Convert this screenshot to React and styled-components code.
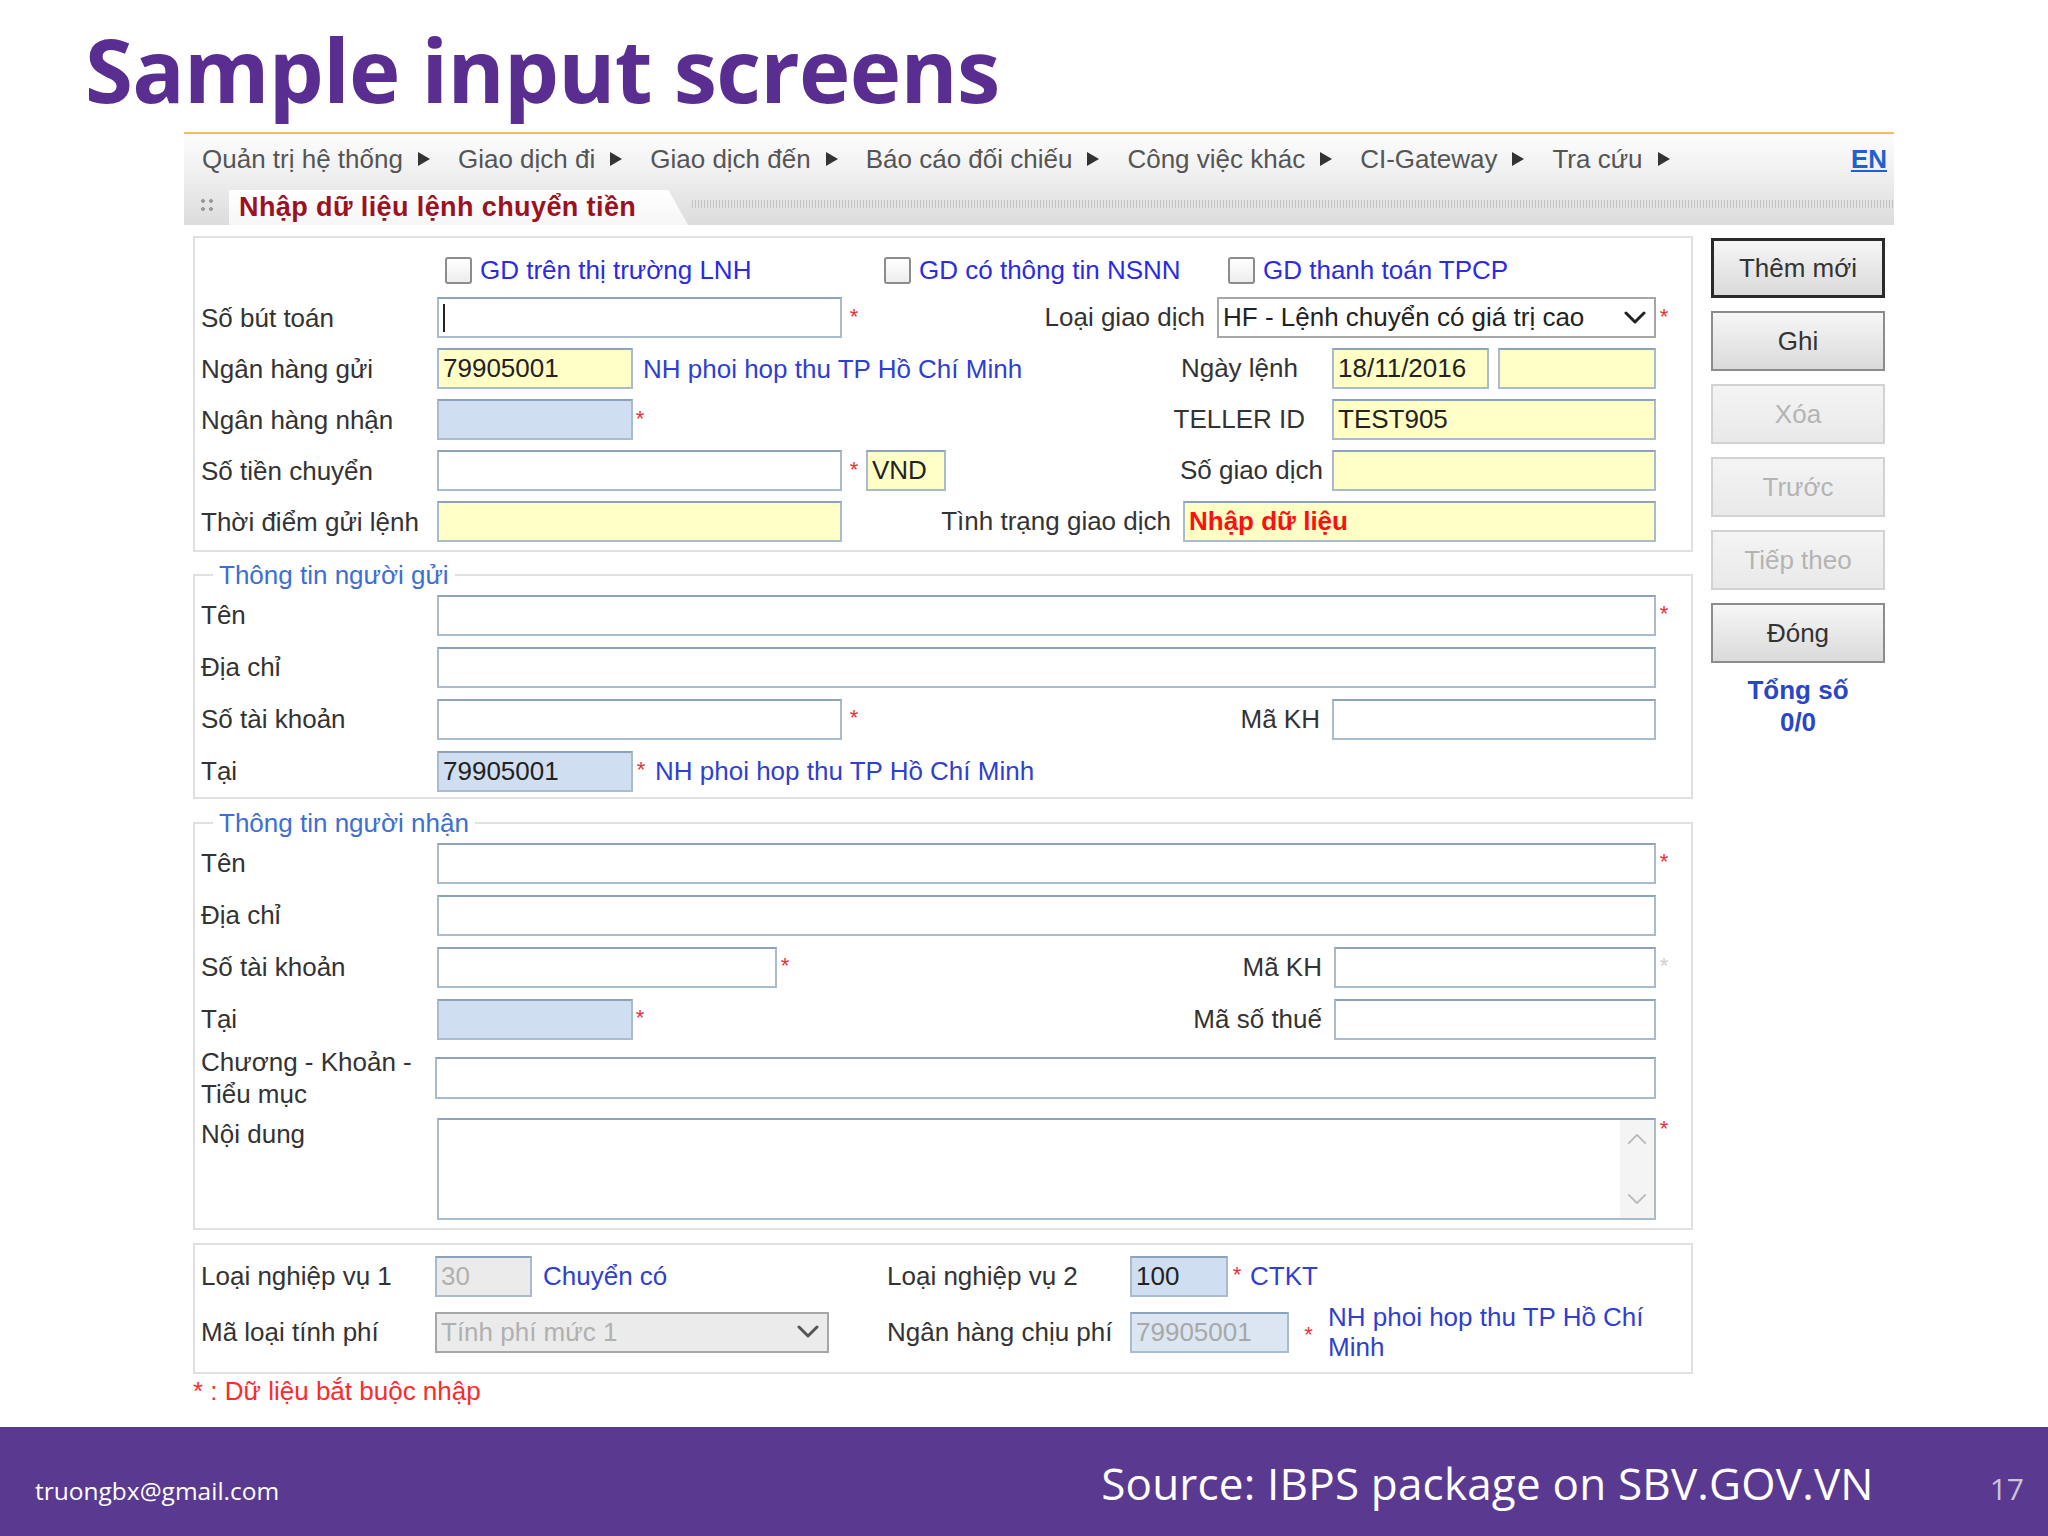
import React from "react";
import styled, { createGlobalStyle } from "styled-components";

const GlobalStyle = createGlobalStyle`
  html, body { margin: 0; padding: 0; background: #fff; }
  body { font-family: "Liberation Sans", Arial, sans-serif; }
`;

const fills = {
  white: "#ffffff",
  yellow: "#ffffc6",
  blue: "#cfdff1",
  pale: "#dbe6f2",
  gray: "#ebebeb",
};

const Slide = styled.div`
  width: 2048px;
  height: 1536px;
  display: flex;
  flex-direction: column;
  background: #fff;
  overflow: hidden;
`;

const Title = styled.h1`
  margin: 14px 0 0 85px;
  font-family: "Open Sans", Lato, sans-serif;
  font-weight: 700;
  font-size: 87px;
  line-height: 110px;
  letter-spacing: -0.7px;
  color: #5a2e91;
`;

const Screen = styled.div`
  margin: 8px 0 0 184px;
  width: 1710px;
  font-family: "Liberation Sans", Arial, sans-serif;
  font-size: 26px;
  color: #333;
`;

const MenuBar = styled.div`
  height: 50px;
  border-top: 2px solid #f3bd62;
  background: linear-gradient(#fdfdfd, #ececec);
  display: flex;
  align-items: center;
  padding: 0 7px 0 18px;
  color: #555;
`;

const MenuItem = styled.span`
  white-space: nowrap;
`;

const Arrow = styled.span`
  width: 0;
  height: 0;
  border-left: 12px solid #333;
  border-top: 7px solid transparent;
  border-bottom: 7px solid transparent;
  margin: 0 28px 0 15px;
`;

const Lang = styled.span`
  margin-left: auto;
  font-weight: 700;
  color: #2160cf;
  text-decoration: underline;
`;

const TabBar = styled.div`
  height: 41px;
  background: linear-gradient(#ebebeb, #dcdcdc);
  display: flex;
  align-items: flex-end;
  padding-left: 15px;
`;

const Grip = styled.span`
  width: 16px;
  height: 16px;
  align-self: center;
  margin-right: 14px;
  background: radial-gradient(circle, #9a9a9a 1.6px, transparent 2.2px) 0 0 / 8px 8px;
`;

const Tab = styled.div`
  height: 35px;
  display: flex;
  align-items: center;
  padding: 0 52px 0 10px;
  background: linear-gradient(#ffffff, #f6f6f6);
  clip-path: polygon(0 0, calc(100% - 20px) 0, 100% 100%, 0 100%);
  font-weight: 700;
  font-size: 27px;
  letter-spacing: 0.4px;
  color: #9b1122;
`;

const Strip = styled.div`
  flex: 1;
  height: 8px;
  margin: 0 0 17px 4px;
  background: repeating-linear-gradient(90deg, #c2c2c2 0 1px, #e4e4e4 1px 3px);
`;

const Body = styled.div`
  display: flex;
  gap: 18px;
  padding: 11px 0 0 9px;
`;

const LeftCol = styled.div`
  width: 1500px;
  display: flex;
  flex-direction: column;
`;

const Panel = styled.div`
  border: 2px solid #e0e0e0;
  padding: ${(p) => p.$pad || "10px 19px 3px 6px"};
  margin-top: ${(p) => p.$mt || 0}px;
`;

const Fieldset = styled.fieldset`
  margin: ${(p) => p.$mt}px 0 0;
  border: 2px solid #e0e0e0;
  padding: 0 19px ${(p) => p.$pb || 0}px 6px;
  min-width: 0;
`;

const Legend = styled.legend`
  margin-left: 12px;
  padding: 0 6px;
  line-height: 28px;
  color: #3b6fd4;
`;

const Row = styled.div`
  display: flex;
  align-items: ${(p) => p.$align || "center"};
  height: ${(p) => p.$h || 51}px;
`;

const CheckRow = styled(Row)`
  padding-left: 244px;
`;

const CheckItem = styled.label`
  display: flex;
  align-items: center;
  width: ${(p) => p.$w}px;
  color: #2b2be6;
  white-space: nowrap;
`;

const CheckBox = styled.span`
  box-sizing: border-box;
  width: 27px;
  height: 27px;
  border: 2px solid #8c8c8c;
  border-radius: 3px;
  background: linear-gradient(#ffffff, #ededed);
  margin-right: 8px;
`;

const Label = styled.span`
  width: ${(p) => p.$w || 236}px;
  flex: none;
  line-height: ${(p) => p.$lh || 32}px;
  margin-top: ${(p) => p.$mt || 0}px;
  white-space: ${(p) => (p.$wrap ? "normal" : "nowrap")};
`;

const RightLabel = styled.span`
  margin-right: ${(p) => p.$mr || 12}px;
  white-space: nowrap;
`;

const Spacer = styled.span`
  flex: 1;
`;

const Box = styled.div`
  box-sizing: border-box;
  width: ${(p) => (p.$w ? `${p.$w}px` : "auto")};
  flex: ${(p) => (p.$w ? "none" : 1)};
  height: ${(p) => p.$h || 41}px;
  margin-top: ${(p) => p.$mt || 0}px;
  border: 2px solid #a9bbcf;
  border-top-color: #8da3bc;
  background: ${(p) => fills[p.$tone || "white"]};
  display: flex;
  align-items: center;
  padding: 0 4px;
  color: ${(p) => p.$color || "#222"};
  font-weight: ${(p) => (p.$bold ? 700 : 400)};
  white-space: nowrap;
  overflow: hidden;
`;

const SelectBox = styled(Box)`
  border-color: #a7a7a7;
  justify-content: space-between;
  padding-right: 8px;
`;

const TextArea = styled(Box)`
  align-items: stretch;
  justify-content: flex-end;
  padding: 0;
`;

const ScrollTrack = styled.div`
  width: 34px;
  background: #f4f4f4;
  display: flex;
  flex-direction: column;
  justify-content: space-between;
  align-items: center;
  padding: 12px 0;
`;

const Caret = styled.span`
  width: 2px;
  height: 28px;
  background: #222;
`;

const Star = styled.span`
  width: ${(p) => p.$w || 16}px;
  flex: none;
  align-self: flex-start;
  margin-top: ${(p) => p.$mt || 14}px;
  color: ${(p) => (p.$faint ? "#cfcfcf" : "#e8303a")};
  font-size: 22px;
  line-height: 1;
  text-align: center;
  visibility: ${(p) => (p.$off ? "hidden" : "visible")};
`;

const Link = styled.span`
  color: #2f3fd0;
  margin-left: ${(p) => p.$ml || 0}px;
  width: ${(p) => (p.$w ? `${p.$w}px` : "auto")};
  line-height: ${(p) => p.$lh || 32}px;
  white-space: ${(p) => (p.$w ? "normal" : "nowrap")};
`;

const Cell = styled.div`
  width: ${(p) => p.$w}px;
  flex: none;
  display: flex;
  align-items: center;
`;

const Footnote = styled.div`
  margin-top: 3px;
  line-height: 28px;
  color: #ff2a2a;
`;

const ButtonCol = styled.div`
  width: 174px;
  padding-top: 2px;
  display: flex;
  flex-direction: column;
  gap: 13px;
`;

const Btn = styled.div`
  box-sizing: border-box;
  height: 60px;
  display: flex;
  align-items: center;
  justify-content: center;
  border: ${(p) =>
    p.$primary ? "3px solid #2a2a2a" : p.$disabled ? "2px solid #d2d2d2" : "2px solid #8c8c8c"};
  background: ${(p) =>
    p.$disabled ? "linear-gradient(#f4f4f4, #e9e9e9)" : "linear-gradient(#f6f6f6, #dadada)"};
  color: ${(p) => (p.$disabled ? "#b4b4b4" : "#333")};
`;

const Total = styled.div`
  margin-top: -2px;
  text-align: center;
  font-weight: 700;
  color: #2a46c8;
  line-height: 32px;
`;

const Footer = styled.div`
  margin-top: auto;
  box-sizing: border-box;
  height: 109px;
  background: #5a3991;
  display: flex;
  align-items: baseline;
  padding: 31px 24px 0 35px;
  color: #fff;
  font-family: "Open Sans", Lato, sans-serif;
`;

const Email = styled.span`
  flex: 1;
  font-size: 24.5px;
`;

const Source = styled.span`
  font-size: 44px;
  line-height: 50px;
  letter-spacing: 0.2px;
`;

const PageNum = styled.span`
  margin-left: 116px;
  font-size: 30px;
  color: #cbc3dd;
`;

const Chevron = ({ up, color = "#222", w = 22, h = 14, sw = 3 }) => (
  <svg width={w} height={h} viewBox="0 0 22 14">
    <polyline
      points={up ? "2,12 11,3 20,12" : "2,2 11,11 20,2"}
      fill="none"
      stroke={color}
      strokeWidth={sw}
      strokeLinecap="round"
      strokeLinejoin="round"
    />
  </svg>
);

const menu = [
  "Quản trị hệ thống",
  "Giao dịch đi",
  "Giao dịch đến",
  "Báo cáo đối chiếu",
  "Công việc khác",
  "CI-Gateway",
  "Tra cứu",
];

const buttons = [
  { text: "Thêm mới", primary: true },
  { text: "Ghi" },
  { text: "Xóa", disabled: true },
  { text: "Trước", disabled: true },
  { text: "Tiếp theo", disabled: true },
  { text: "Đóng" },
];

const BANK = "NH phoi hop thu TP Hồ Chí Minh";

export default function App() {
  return (
    <Slide>
      <GlobalStyle />
      <Title>Sample input screens</Title>
      <Screen>
        <MenuBar>
          {menu.map((m) => (
            <React.Fragment key={m}>
              <MenuItem>{m}</MenuItem>
              <Arrow />
            </React.Fragment>
          ))}
          <Lang>EN</Lang>
        </MenuBar>
        <TabBar>
          <Grip />
          <Tab>Nhập dữ liệu lệnh chuyển tiền</Tab>
          <Strip />
        </TabBar>
        <Body>
          <LeftCol>
            <Panel>
              <CheckRow $h={44}>
                <CheckItem $w={439}>
                  <CheckBox />
                  GD trên thị trường LNH
                </CheckItem>
                <CheckItem $w={344}>
                  <CheckBox />
                  GD có thông tin NSNN
                </CheckItem>
                <CheckItem>
                  <CheckBox />
                  GD thanh toán TPCP
                </CheckItem>
              </CheckRow>
              <Row>
                <Label>Số bút toán</Label>
                <Box $w={405}>
                  <Caret />
                </Box>
                <Star $w={24}>*</Star>
                <Spacer />
                <RightLabel>Loại giao dịch</RightLabel>
                <SelectBox $w={439}>
                  HF - Lệnh chuyển có giá trị cao
                  <Chevron />
                </SelectBox>
                <Star>*</Star>
              </Row>
              <Row>
                <Label>Ngân hàng gửi</Label>
                <Box $w={196} $tone="yellow">79905001</Box>
                <Link $ml={10}>{BANK}</Link>
                <Spacer />
                <RightLabel $mr={34}>Ngày lệnh</RightLabel>
                <Box $w={157} $tone="yellow">18/11/2016</Box>
                <Box $w={158} $tone="yellow" style={{ marginLeft: 9 }} />
                <Star $off>*</Star>
              </Row>
              <Row>
                <Label>Ngân hàng nhận</Label>
                <Box $w={196} $tone="blue" />
                <Star $w={14}>*</Star>
                <Spacer />
                <RightLabel $mr={27}>TELLER ID</RightLabel>
                <Box $w={324} $tone="yellow">TEST905</Box>
                <Star $off>*</Star>
              </Row>
              <Row>
                <Label>Số tiền chuyển</Label>
                <Box $w={405} />
                <Star $w={24}>*</Star>
                <Box $w={80} $tone="yellow">VND</Box>
                <Spacer />
                <RightLabel $mr={9}>Số giao dịch</RightLabel>
                <Box $w={324} $tone="yellow" />
                <Star $off>*</Star>
              </Row>
              <Row>
                <Label>Thời điểm gửi lệnh</Label>
                <Box $w={405} $tone="yellow" />
                <Spacer />
                <RightLabel>Tình trạng giao dịch</RightLabel>
                <Box $w={473} $tone="yellow" $color="#ff1010" $bold>
                  Nhập dữ liệu
                </Box>
                <Star $off>*</Star>
              </Row>
            </Panel>

            <Fieldset $mt={9}>
              <Legend>Thông tin người gửi</Legend>
              <Row $h={52}>
                <Label>Tên</Label>
                <Box />
                <Star>*</Star>
              </Row>
              <Row $h={52}>
                <Label>Địa chỉ</Label>
                <Box />
                <Star $off>*</Star>
              </Row>
              <Row $h={52}>
                <Label>Số tài khoản</Label>
                <Box $w={405} />
                <Star $w={24}>*</Star>
                <Spacer />
                <RightLabel>Mã KH</RightLabel>
                <Box $w={324} />
                <Star $off>*</Star>
              </Row>
              <Row $h={52}>
                <Label>Tại</Label>
                <Box $w={196} $tone="blue">79905001</Box>
                <Star $w={16}>*</Star>
                <Link $ml={6}>{BANK}</Link>
              </Row>
            </Fieldset>

            <Fieldset $mt={10} $pb={2}>
              <Legend>Thông tin người nhận</Legend>
              <Row $h={52}>
                <Label>Tên</Label>
                <Box />
                <Star>*</Star>
              </Row>
              <Row $h={52}>
                <Label>Địa chỉ</Label>
                <Box />
                <Star $off>*</Star>
              </Row>
              <Row $h={52}>
                <Label>Số tài khoản</Label>
                <Box $w={340} />
                <Star $w={16}>*</Star>
                <Spacer />
                <RightLabel>Mã KH</RightLabel>
                <Box $w={322} />
                <Star $faint>*</Star>
              </Row>
              <Row $h={52}>
                <Label>Tại</Label>
                <Box $w={196} $tone="blue" />
                <Star $w={14}>*</Star>
                <Spacer />
                <RightLabel>Mã số thuế</RightLabel>
                <Box $w={322} />
                <Star $off>*</Star>
              </Row>
              <Row $h={65}>
                <Label $wrap $lh={32} $w={234}>
                  Chương - Khoản -<br />
                  Tiểu mục
                </Label>
                <Box $h={42} />
                <Star $off>*</Star>
              </Row>
              <Row $h={116} $align="flex-start">
                <Label $lh={28} $mt={10}>
                  Nội dung
                </Label>
                <TextArea $h={102} $mt={8}>
                  <ScrollTrack>
                    <Chevron up color="#b8b8b8" w={20} h={13} sw={2} />
                    <Chevron color="#b8b8b8" w={20} h={13} sw={2} />
                  </ScrollTrack>
                </TextArea>
                <Star $mt={8}>*</Star>
              </Row>
            </Fieldset>

            <Panel $mt={13} $pad="5px 19px 10px 6px">
              <Row $h={52}>
                <Label $w={234}>Loại nghiệp vụ 1</Label>
                <Cell $w={452}>
                  <Box $w={97} $tone="gray" $color="#b0b0b0">
                    30
                  </Box>
                  <Link $ml={11}>Chuyển có</Link>
                </Cell>
                <Label $w={243}>Loại nghiệp vụ 2</Label>
                <Box $w={98} $tone="blue">100</Box>
                <Star $w={18}>*</Star>
                <Link $ml={4}>CTKT</Link>
              </Row>
              <Row $h={60}>
                <Label $w={234}>Mã loại tính phí</Label>
                <Cell $w={452}>
                  <SelectBox $w={394} $tone="gray" $color="#b0b0b0">
                    Tính phí mức 1
                    <Chevron color="#555" />
                  </SelectBox>
                </Cell>
                <Label $w={243}>Ngân hàng chịu phí</Label>
                <Box $w={159} $tone="pale" $color="#a8a8a8">
                  79905001
                </Box>
                <Star $w={39} $mt={22}>*</Star>
                <Link $w={320} $lh={30}>
                  {BANK}
                </Link>
              </Row>
            </Panel>
            <Footnote>* : Dữ liệu bắt buộc nhập</Footnote>
          </LeftCol>

          <ButtonCol>
            {buttons.map((b) => (
              <Btn key={b.text} $primary={b.primary} $disabled={b.disabled}>
                {b.text}
              </Btn>
            ))}
            <Total>
              Tổng số
              <br />
              0/0
            </Total>
          </ButtonCol>
        </Body>
      </Screen>
      <Footer>
        <Email>truongbx@gmail.com</Email>
        <Source>Source: IBPS package on SBV.GOV.VN</Source>
        <PageNum>17</PageNum>
      </Footer>
    </Slide>
  );
}
